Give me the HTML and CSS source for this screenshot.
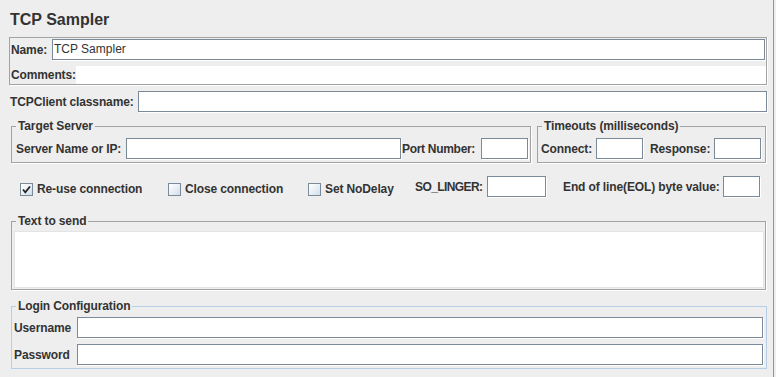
FILE: index.html
```html
<!DOCTYPE html>
<html>
<head>
<meta charset="utf-8">
<title>TCP Sampler</title>
<link rel="stylesheet" href="styles.css">
</head>
<body>
<div class="frame">
  <div class="title">TCP Sampler</div>

  <div class="np">
    <div class="np-row name-row">
      <span class="lbl w-name">Name:</span>
      <div class="field grow name-field"><span class="val">TCP Sampler</span></div>
    </div>
    <div class="np-row comm-row">
      <span class="lbl w-comm">Comments:</span>
      <div class="area grow"></div>
    </div>
  </div>

  <div class="cls-row">
    <span class="lbl w-cls">TCPClient classname:</span>
    <div class="field grow"></div>
  </div>

  <div class="srv-row">
    <fieldset class="grp grp-target">
      <legend>Target Server</legend>
      <div class="grp-body target-body">
        <span class="lbl w-srv">Server Name or IP:</span>
        <div class="field grow"></div>
        <span class="lbl w-port">Port Number:</span>
        <div class="field f-port"></div>
      </div>
    </fieldset>
    <fieldset class="grp grp-timeouts">
      <legend>Timeouts (milliseconds)</legend>
      <div class="grp-body timeouts-body">
        <span class="lbl w-conn">Connect:</span>
        <div class="field f-port"></div>
        <span class="lbl w-resp">Response:</span>
        <div class="field f-port"></div>
      </div>
    </fieldset>
  </div>

  <div class="opt-row">
    <label class="chk chk-reuse"><span class="box"><svg width="11" height="11" viewBox="0 0 11 11"><path d="M2 5.5 L4.3 8.3 L9 2.5" fill="none" stroke="#222" stroke-width="1.8"/></svg></span><span class="lbl">Re-use connection</span></label>
    <label class="chk chk-close"><span class="box"></span><span class="lbl">Close connection</span></label>
    <label class="chk chk-delay"><span class="box"></span><span class="lbl">Set NoDelay</span></label>
    <span class="lbl w-linger">SO_LINGER:</span>
    <div class="field f-linger"></div>
    <span class="lbl w-eol">End of line(EOL) byte value:</span>
    <div class="field f-eol"></div>
  </div>

  <fieldset class="grp grp-text">
    <legend>Text to send</legend>
    <div class="text-body"><div class="textarea"></div></div>
  </fieldset>

  <fieldset class="grp grp-login">
    <legend>Login Configuration</legend>
    <div class="login-body">
      <div class="login-row">
        <span class="lbl w-user">Username</span>
        <div class="field grow"></div>
      </div>
      <div class="login-row">
        <span class="lbl w-user">Password</span>
        <div class="field grow"></div>
      </div>
    </div>
  </fieldset>
</div>
</body>
</html>
```
FILE: styles.css
```css
* { box-sizing: border-box; }

html, body {
  margin: 0;
  padding: 0;
  background: #eeeeee;
}

body {
  font-family: "Liberation Sans", Arial, sans-serif;
  color: #333333;
  font-size: 12px;
}

.frame {
  width: 774px;
  height: 377px;
  padding-top: 10px;
  border-right: 1px solid #8d959c;
  overflow: hidden;
}

.title {
  padding-left: 10px;
  font-size: 16px;
  font-weight: bold;
  line-height: 20px;
  height: 20px;
}

.lbl {
  font-weight: bold;
  font-size: 12px;
  line-height: 14px;
  letter-spacing: -0.12px;
  white-space: nowrap;
  flex: none;
}

.field {
  height: 21px;
  background: #ffffff;
  border: 1px solid #7a8a99;
  box-shadow: 1px 1px 0 #ffffff;
  flex: none;
}

.grow { flex: 1 1 auto; min-width: 0; }

/* Name / comments panel */
.np {
  margin-top: 7px;
  margin-left: 9px;
  width: 758px;
  height: 48px;
  border: 1px solid #a3a3a3;
  box-shadow: 1px 1px 0 #ffffff;
  padding: 1px 0 0 1px;
}

.np-row {
  display: flex;
  align-items: center;
}

.name-row { height: 21px; }
.name-field { margin-right: 1px; }
.val {
  display: block;
  padding-left: 1px;
  line-height: 19px;
  font-size: 12px;
}

.comm-row {
  margin-top: 6px;
  height: 18px;
}

.area {
  height: 18px;
  background: #ffffff;
}

.w-name { width: 41px; }
.w-comm { width: 65px; }

/* classname row */
.cls-row {
  display: flex;
  align-items: center;
  margin-top: 6px;
  margin-left: 10px;
  width: 757px;
  height: 21px;
}
.w-cls { width: 128px; }

/* groups */
.grp {
  margin: 0;
  padding: 0;
  min-width: 0;
  border: 1px solid #a3a3a3;
  box-shadow: 1px 1px 0 #ffffff;
}

.grp legend {
  margin-left: 4px;
  padding: 0 2px;
  font-weight: bold;
  font-size: 12px;
  line-height: 14px;
  height: 14px;
  letter-spacing: -0.12px;
}

.srv-row {
  display: flex;
  gap: 6px;
  margin-top: 7px;
  margin-left: 11px;
  width: 755px;
}

.grp-target { width: 520px; flex: none; }
.grp-timeouts { width: 229px; flex: none; }

.grp-body {
  display: flex;
  align-items: center;
}

.target-body { padding: 5px 2px 3px 4px; }
.timeouts-body { padding: 5px 4px 3px 3px; }

.w-srv { width: 110px; }
.w-port { width: 80px; padding-left: 1px; letter-spacing: -0.3px; }
.f-port { width: 47px; }
.w-conn { width: 55px; }
.w-resp { width: 71px; padding-left: 7px; }

/* options row */
.opt-row {
  display: flex;
  align-items: center;
  margin-top: 13px;
  margin-left: 20px;
  height: 21px;
}

.chk {
  display: flex;
  align-items: flex-start;
  align-self: flex-start;
  margin-top: 6px;
  height: 14px;
  flex: none;
}

.chk .box {
  width: 13px;
  height: 13px;
  margin-top: 1px;
  margin-right: 4px;
  border: 1px solid #7a8a99;
  background: linear-gradient(135deg, #ffffff 0%, #e9f0f6 50%, #d2deea 100%);
  display: flex;
  align-items: center;
  justify-content: center;
  flex: none;
}

.chk .box svg { display: block; }

.chk-reuse { width: 148px; }
.chk-close { width: 140px; }
.chk-delay { width: 107px; }

.w-linger { width: 72px; letter-spacing: -0.6px; }
.f-linger { width: 59px; }
.w-eol { width: 177px; padding-left: 17px; }
.f-eol { width: 37px; }

/* text to send */
.grp-text {
  margin-top: 17px;
  margin-left: 11px;
  width: 755px;
}

.text-body { padding: 4px 2px 2px 3px; }

.textarea {
  height: 55px;
  background: #ffffff;
  box-shadow: 0 0 0 1px #e4e4e4;
}

/* login */
.grp-login {
  margin-top: 9px;
  margin-left: 11px;
  width: 756px;
  border: 1px solid #b6cee6;
  box-shadow: none;
}

.login-body { padding: 4px 3px 3px 2px; }

.login-row {
  display: flex;
  align-items: center;
  height: 21px;
}

.login-row + .login-row { margin-top: 6px; }

.w-user { width: 63px; }
```
